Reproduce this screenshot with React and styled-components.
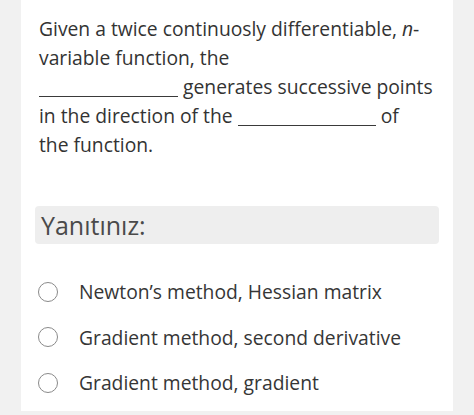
import React from "react";
import styled, { createGlobalStyle } from "styled-components";

const GlobalStyle = createGlobalStyle`
  html, body {
    margin: 0;
    padding: 0;
    background: #f1f1f1;
  }
  body {
    font-family: "Open Sans", "Liberation Sans", sans-serif;
  }
`;

const Page = styled.div`
  width: 474px;
  height: 415px;
  overflow: hidden;
  padding: 0 21px;
  box-sizing: border-box;
`;

const Card = styled.div`
  background: #ffffff;
  height: 411px;
  padding: 14px 14px 0 18px;
  box-sizing: border-box;
`;

const Question = styled.p`
  margin: 0;
  font-size: 19.3px;
  line-height: 29px;
  color: #333333;
  white-space: nowrap;
`;

const Blank = styled.span`
  display: inline-block;
  width: ${(p) => p.$width}px;
  height: 0;
  border-bottom: 1.2px solid #3a3a3a;
  vertical-align: -3px;
`;

const AnswerBox = styled.div`
  margin: 47px 0 0 -4px;
  height: 38px;
  display: flex;
  align-items: center;
  padding: 0 6px;
  background: #eeeeee;
  border-radius: 4px;
  font-size: 25px;
  color: #4a4a4a;
`;

const Options = styled.div`
  display: flex;
  flex-direction: column;
  margin-top: 25px;
`;

const Option = styled.label`
  display: flex;
  align-items: center;
  height: 45.5px;
  font-size: 19.3px;
  color: #363636;
`;

const Radio = styled.span`
  width: 20px;
  height: 20px;
  box-sizing: border-box;
  border: 1.5px solid #8a8a8a;
  border-radius: 50%;
  margin: 0 21px 0 -1px;
  flex-shrink: 0;
`;

const options = [
  "Newton\u2019s method, Hessian matrix",
  "Gradient method, second derivative",
  "Gradient method, gradient",
];

export default function App() {
  return (
    <Page>
      <GlobalStyle />
      <Card>
        <Question>
          Given a twice continuosly differentiable, <i>n</i>-<br />
          variable function, the
          <br />
          <Blank $width={139} /> generates successive points
          <br />
          in the direction of the <Blank $width={138} /> of
          <br />
          the function.
        </Question>
        <AnswerBox>Yanıtınız:</AnswerBox>
        <Options>
          {options.map((o) => (
            <Option key={o}>
              <Radio />
              {o}
            </Option>
          ))}
        </Options>
      </Card>
    </Page>
  );
}
